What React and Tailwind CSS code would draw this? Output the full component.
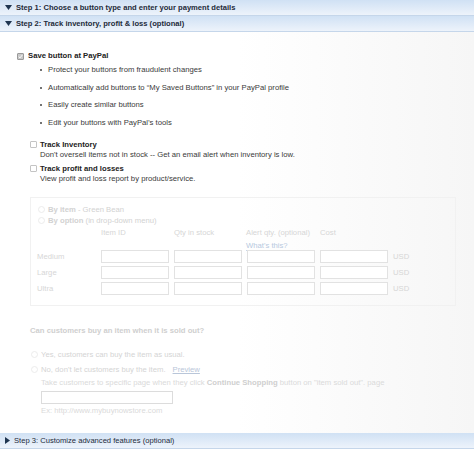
import React from 'react';

const font = { fontFamily: '"Liberation Sans", Arial, sans-serif' };

function StepBar({ label, open, bold }) {
  return (
    <div className="flex h-[16px] items-center gap-[4px] border-b border-[#c5d6ea] bg-gradient-to-b from-[#d0e1f4] to-[#edf3fb] pl-[5px]">
      {open ? (
        <svg width="7" height="5" viewBox="0 0 7 5"><path d="M0 0h7L3.5 5z" fill="#1f3550" /></svg>
      ) : (
        <svg width="5" height="7" viewBox="0 0 5 7"><path d="M0 0v7l5-3.5z" fill="#1f3550" /></svg>
      )}
      <span className={`text-[7.6px] text-[#1e2b3a] ${bold ? 'font-bold' : ''}`}>{label}</span>
    </div>
  );
}

function Box({ checked }) {
  return (
    <span className={`inline-flex h-[7px] w-[7px] shrink-0 items-center justify-center rounded-[1px] border ${checked ? 'border-[#9a9a9a] bg-[#c8c8c8]' : 'border-[#c4c4c4] bg-white'}`}>
      {checked && (
        <svg width="5" height="5" viewBox="0 0 5 5"><path d="M0.7 2.6l1.3 1.3 2.4-3" stroke="#fff" strokeWidth="0.9" fill="none" /></svg>
      )}
    </span>
  );
}

function Radio() {
  return <span className="inline-block h-[7px] w-[7px] shrink-0 rounded-full border border-[#ececec] bg-white" />;
}

const cell = 'h-[13px] w-[68px] border border-[#e2e2e2] bg-white';

function OptionRow({ name }) {
  return (
    <div className="flex h-[16px] items-center">
      <span className="w-[64px] text-[#d6d6d6]">{name}</span>
      <div className="flex gap-[5px]">
        <span className={cell} />
        <span className={cell} />
        <span className={cell} />
        <span className={cell} />
      </div>
      <span className="ml-[5px] text-[#d6d6d6]">USD</span>
    </div>
  );
}

export default function App() {
  const bullets = [
    'Protect your buttons from fraudulent changes',
    'Automatically add buttons to \u201cMy Saved Buttons\u201d in your PayPal profile',
    'Easily create similar buttons',
    "Edit your buttons with PayPal\u2019s tools",
  ];

  return (
    <div style={font} className="flex h-[449px] w-[474px] flex-col overflow-hidden bg-white text-[7.7px] leading-[10px] text-[#3a3a3a]">
      <StepBar label="Step 1: Choose a button type and enter your payment details" open bold />
      <StepBar label="Step 2: Track inventory, profit & loss (optional)" open bold />

      <div className="flex flex-1 flex-col bg-gradient-to-r from-white via-white to-[#f6f6f6] pl-[17px]">
        <div className="mt-[19px] flex items-center gap-[4px]">
          <Box checked />
          <span className="font-bold text-[#222]">Save button at PayPal</span>
        </div>
        <ul className="mt-[4px] flex flex-col gap-[7.5px] pl-[23px]">
          {bullets.map((b) => (
            <li key={b} className="flex items-center gap-[6px]">
              <span className="h-[2px] w-[2px] rounded-full bg-[#444]" />
              <span>{b}</span>
            </li>
          ))}
        </ul>

        <div className="mt-[12px] pl-[13px]">
          <div className="flex items-center gap-[3px]">
            <Box />
            <span className="font-bold text-[#222]">Track Inventory</span>
          </div>
          <div className="pl-[10px]">Don't oversell items not in stock -- Get an email alert when inventory is low.</div>
          <div className="mt-[4px] flex items-center gap-[3px]">
            <Box />
            <span className="font-bold text-[#222]">Track profit and losses</span>
          </div>
          <div className="pl-[10px]">View profit and loss report by product/service.</div>
        </div>

        <div className="ml-[13px] mr-[18px] mt-[13px] flex h-[109px] flex-col border border-[#f1f1f1] pl-[6px] pt-[7px]">
          <div className="flex items-center gap-[3px] pl-[1px] text-[#d2d2d2]">
            <Radio />
            <span><b>By item</b> - Green Bean</span>
          </div>
          <div className="mt-[1px] flex items-center gap-[3px] pl-[1px] text-[#d2d2d2]">
            <Radio />
            <span><b>By option</b> (in drop-down menu)</span>
          </div>
          <div className="mt-[2px] flex text-[#d6d6d6]">
            <span className="w-[64px]" />
            <span className="w-[73px]">Item ID</span>
            <span className="w-[72px]">Qty in stock</span>
            <span className="flex w-[74px] flex-col">
              <span>Alert qty. (optional)</span>
              <span className="mt-[3px] w-fit border-b border-dashed border-[#c8d6e8] leading-[9px] text-[#b7c9de]">What's this?</span>
            </span>
            <span>Cost</span>
          </div>
          <div className="mt-[-2px] flex flex-col">
            <OptionRow name="Medium" />
            <OptionRow name="Large" />
            <OptionRow name="Ultra" />
          </div>
        </div>

        <div className="mt-[20px] pl-[13px] font-bold text-[#cfcfcf]">Can customers buy an item when it is sold out?</div>

        <div className="mt-[14px] flex items-center gap-[3px] pl-[14px] text-[#d4d4d4]">
          <Radio />
          <span>Yes, customers can buy the item as usual.</span>
        </div>
        <div className="mt-[5px] flex items-center gap-[3px] pl-[14px] text-[#d4d4d4]">
          <Radio />
          <span>No, don't let customers buy the item.</span>
          <span className="ml-[4px] text-[#b9c6d9] underline">Preview</span>
        </div>
        <div className="mt-[3px] pl-[24px] text-[#dadada]">
          Take customers to specific page when they click <b className="text-[#cfcfcf]">Continue Shopping</b> button on "item sold out". page
        </div>
        <span className="ml-[24px] mt-[3px] h-[13px] w-[132px] border border-[#dcdcdc] bg-white" />
        <div className="mt-[2px] pl-[24px] text-[#dadada]">Ex: http://www.mybuynowstore.com</div>

        <div className="flex-1" />
      </div>

      <StepBar label="Step 3: Customize advanced features (optional)" />
    </div>
  );
}
